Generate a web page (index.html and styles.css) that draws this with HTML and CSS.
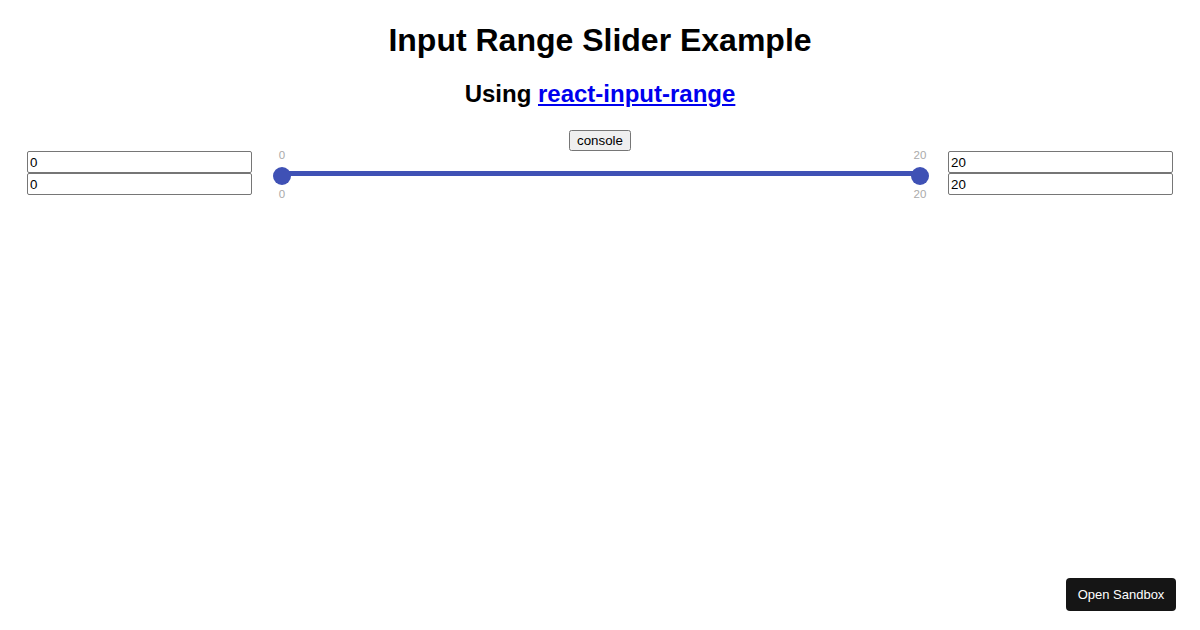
FILE: index.html
```html
<!DOCTYPE html>
<html>
<head>
<meta charset="utf-8">
<link rel="stylesheet" href="styles.css">
</head>
<body>
<div class="app">
  <h1 class="title">Input Range Slider Example</h1>
  <h2 class="subtitle">Using <a href="#" class="link">react-input-range</a></h2>
  <div class="actions"><button class="console-btn">console</button></div>
  <div class="range-row">
    <div class="inputs">
      <input class="num" type="text" value="0">
      <input class="num" type="text" value="0">
    </div>
    <div class="slider">
      <div class="labels labels-top">
        <span class="label">0</span>
        <span class="label">20</span>
      </div>
      <div class="track">
        <div class="track-active"></div>
        <span class="thumb" style="left: 0%"></span>
        <span class="thumb" style="left: 100%"></span>
      </div>
      <div class="labels labels-bottom">
        <span class="label">0</span>
        <span class="label">20</span>
      </div>
    </div>
    <div class="inputs">
      <input class="num" type="text" value="20">
      <input class="num" type="text" value="20">
    </div>
  </div>
</div>
<a href="#" class="sandbox-btn">Open Sandbox</a>
</body>
</html>
```

FILE: styles.css
```css
html, body {
  margin: 0;
  padding: 0;
  background: #fff;
}
body {
  margin: 8px;
  font-family: "Liberation Sans", Arial, sans-serif;
  color: #000;
}
.app {
  text-align: center;
  padding-bottom: 40px;
}
.title {
  font-size: 32px;
  font-weight: bold;
  margin: 14px 0 21.44px;
}
.subtitle {
  font-size: 24px;
  font-weight: bold;
  margin: 19.92px 0 0;
}
.link {
  color: #0000ee;
  text-decoration: underline;
}
.actions {
  padding-top: 22px;
  height: 21px;
  display: flex;
  justify-content: center;
}
.console-btn {
  font-family: "Liberation Sans", Arial, sans-serif;
  font-size: 13.333px;
  height: 21px;
  padding: 1px 6px;
}
.range-row {
  display: grid;
  grid-template-columns: 225px 1fr 225px;
  column-gap: 21px;
  padding: 0 19px;
  align-items: start;
}
.inputs {
  display: flex;
  flex-direction: column;
}
.num {
  box-sizing: border-box;
  width: 225px;
  height: 22px;
  margin: 0;
  font-family: "Liberation Sans", Arial, sans-serif;
  font-size: 13.333px;
  padding: 1px 2px;
  border: 1px solid #767676;
  border-radius: 2px;
  color: #000;
}
.slider {
  display: flex;
  flex-direction: column;
  padding: 0 9px;
  margin-top: -2px;
  margin-right: -2px;
}
.labels {
  display: flex;
  justify-content: space-between;
  margin: 0 -9px;
  height: 13px;
}
.label {
  width: 18px;
  text-align: center;
  font-size: 11.5px;
  line-height: 13px;
  color: #aaa;
}
.labels-top {
  margin-bottom: 9px;
}
.labels-bottom {
  margin-top: 12px;
}
.track {
  position: relative;
  height: 5px;
  background: #eee;
  border-radius: 3px;
}
.track-active {
  position: absolute;
  inset: 0;
  background: #3f51b5;
  border-radius: 3px;
}
.thumb {
  position: absolute;
  top: -4px;
  width: 18px;
  height: 18px;
  margin-left: -9px;
  border-radius: 50%;
  background: #3f51b5;
}
.sandbox-btn {
  position: fixed;
  right: 24px;
  bottom: 19px;
  width: 110px;
  height: 33px;
  box-sizing: border-box;
  display: flex;
  align-items: center;
  justify-content: center;
  background: #151515;
  color: #fff;
  border-radius: 4px;
  font-family: "Liberation Sans", Arial, sans-serif;
  font-size: 13px;
  text-decoration: none;
}
```
